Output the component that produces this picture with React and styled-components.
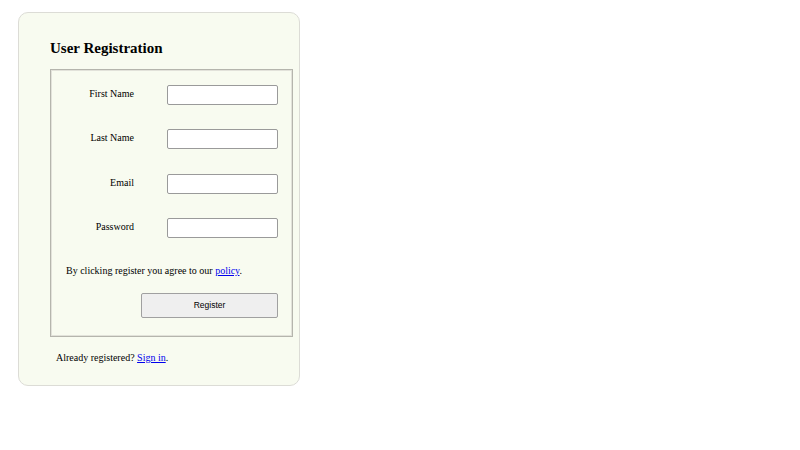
import React from "react";
import styled, { createGlobalStyle } from "styled-components";

const Global = createGlobalStyle`
  html, body { margin: 0; padding: 0; background: #fff; }
  body { font-family: "Liberation Serif", "Times New Roman", serif; color: #000; }
`;

const Page = styled.div`
  padding: 12px 0 0 18px;
`;

const Card = styled.div`
  box-sizing: border-box;
  width: 282px;
  height: 374px;
  background: #f8fbf0;
  border: 1px solid #dcdcd6;
  border-radius: 10px;
  padding: 26px 6px 0 31px;
`;

const Title = styled.h3`
  margin: 0 0 12px 0;
  font-size: 15px;
  font-weight: bold;
  line-height: 18px;
`;

const Fields = styled.fieldset`
  box-sizing: border-box;
  margin: 0;
  width: 243px;
  height: 268px;
  border: 1px solid #b5b5ad;
  box-shadow: inset 0 0 0 1px #e2e2da;
  padding: 15px 14px 0 14px;
`;

const Grid = styled.div`
  display: grid;
  grid-template-columns: 69px 111px;
  column-gap: 33px;
  row-gap: 24.3px;
  align-items: center;
`;

const Label = styled.label`
  font-size: 10px;
  line-height: 12px;
  text-align: right;
  padding-bottom: 2px;
`;

const Input = styled.input`
  box-sizing: border-box;
  width: 111px;
  height: 20px;
  margin: 0;
  border: 1px solid #9a9a9a;
  border-radius: 2px;
  background: #fff;
`;

const Note = styled.p`
  margin: 27px 0 0 1px;
  font-size: 10px;
  line-height: 12px;
`;

const Link = styled.a`
  color: #0000ee;
  text-decoration: underline;
`;

const ButtonRow = styled.div`
  display: flex;
  justify-content: flex-end;
  margin-top: 16px;
`;

const Button = styled.button`
  box-sizing: border-box;
  width: 137px;
  height: 25px;
  background: #efefef;
  border: 1px solid #a0a0a0;
  border-radius: 2px;
  font-family: "Liberation Sans", Arial, sans-serif;
  font-size: 8.5px;
  color: #000;
`;

const Footer = styled.p`
  margin: 15px 0 0 6px;
  font-size: 10px;
  line-height: 12px;
`;

export default function App() {
  const fields = ["First Name", "Last Name", "Email", "Password"];
  return (
    <Page>
      <Global />
      <Card>
        <Title>User Registration</Title>
        <Fields>
          <Grid>
            {fields.map((f) => (
              <React.Fragment key={f}>
                <Label>{f}</Label>
                <Input type={f === "Password" ? "password" : "text"} />
              </React.Fragment>
            ))}
          </Grid>
          <Note>
            By clicking register you agree to our <Link href="#">policy</Link>.
          </Note>
          <ButtonRow>
            <Button>Register</Button>
          </ButtonRow>
        </Fields>
        <Footer>
          Already registered? <Link href="#">Sign in</Link>.
        </Footer>
      </Card>
    </Page>
  );
}
